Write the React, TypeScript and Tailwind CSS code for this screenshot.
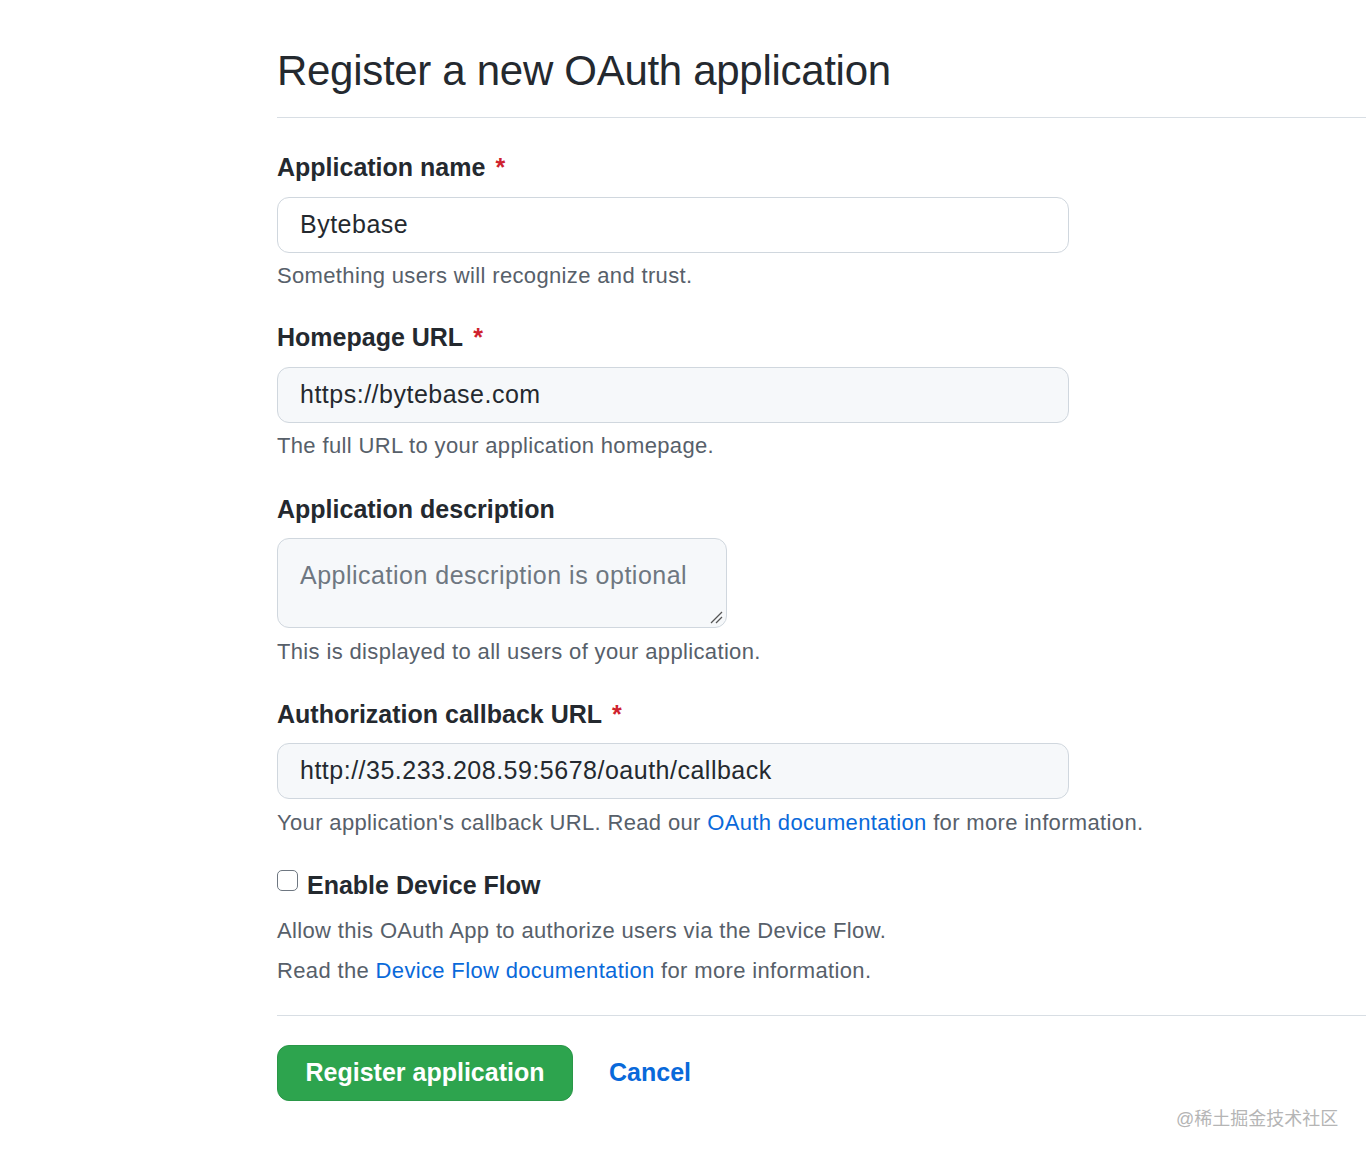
import React from "react";

const Req = () => <span className="text-[#cf222e] ml-[10px]">*</span>;

export default function App() {
  return (
    <div className="min-h-[1158px] w-[1366px] bg-white text-[#24292f] relative" style={{ fontFamily: '"Liberation Sans", Arial, sans-serif' }}>
      <div className="pl-[277px] pt-[45px]">
        <h1 className="text-[42px] leading-[52px] font-normal tracking-[-0.3px] pb-[20px] border-b border-[#d8dee4]">
          Register a new OAuth application
        </h1>
        <div className="w-[900px] pt-[33px]">
          <div className="text-[25px] font-bold leading-[32px]">Application name<Req /></div>
          <div className="mt-[14px] w-[792px] h-[56px] rounded-[12px] border border-[#d0d7de] bg-white flex items-center px-[22px] text-[25px] tracking-[0.5px]">Bytebase</div>
          <div className="mt-[9px] text-[22px] tracking-[0.35px] text-[#57606a] leading-[28px]">Something users will recognize and trust.</div>

          <div className="mt-[31px] text-[25px] font-bold leading-[32px]">Homepage URL<Req /></div>
          <div className="mt-[14px] w-[792px] h-[56px] rounded-[12px] border border-[#d0d7de] bg-[#f6f8fa] flex items-center px-[22px] text-[25px] tracking-[0.5px]">https://bytebase.com</div>
          <div className="mt-[9px] text-[22px] tracking-[0.35px] text-[#57606a] leading-[28px]">The full URL to your application homepage.</div>

          <div className="mt-[33px] text-[25px] font-bold leading-[32px]">Application description</div>
          <div className="mt-[13px] w-[450px] h-[90px] rounded-[12px] border border-[#d0d7de] bg-[#f6f8fa] relative px-[22px] pt-[18px] text-[25px] tracking-[0.5px] text-[#6e7781]">
            Application description is optional
            <svg className="absolute right-[3px] bottom-[3px]" width="14" height="14" viewBox="0 0 14 14">
              <line x1="2" y1="13" x2="13" y2="2" stroke="#555" strokeWidth="1.2" />
              <line x1="7" y1="13" x2="13" y2="7" stroke="#555" strokeWidth="1.2" />
            </svg>
          </div>
          <div className="mt-[10px] text-[22px] tracking-[0.35px] text-[#57606a] leading-[28px]">This is displayed to all users of your application.</div>

          <div className="mt-[32px] text-[25px] font-bold leading-[32px]">Authorization callback URL<Req /></div>
          <div className="mt-[13px] w-[792px] h-[56px] rounded-[12px] border border-[#d0d7de] bg-[#f6f8fa] flex items-center px-[22px] text-[25px] tracking-[0.5px]">http://35.233.208.59:5678/oauth/callback</div>
          <div className="mt-[10px] text-[22px] tracking-[0.35px] text-[#57606a] leading-[28px]">
            Your application's callback URL. Read our <span className="text-[#0969da]">OAuth documentation</span> for more information.
          </div>

          <div className="mt-[32px] flex items-center">
            <span className="w-[21px] h-[21px] rounded-[5px] border-[1.5px] border-[#6e7781] bg-white mr-[9px] -mt-[9px]"></span>
            <span className="text-[25px] font-bold leading-[32px]">Enable Device Flow</span>
          </div>
          <div className="mt-[16px] text-[22px] tracking-[0.35px] text-[#57606a] leading-[28px]">Allow this OAuth App to authorize users via the Device Flow.</div>
          <div className="mt-[12px] text-[22px] tracking-[0.35px] text-[#57606a] leading-[28px]">
            Read the <span className="text-[#0969da]">Device Flow documentation</span> for more information.
          </div>
        </div>
        <div className="mt-[30px] border-t border-[#d8dee4]"></div>
        <div className="mt-[29px] flex items-center">
          <div className="w-[296px] h-[56px] rounded-[12px] bg-[#2da44e] border border-[#2a9748] text-white text-[25px] font-bold flex items-center justify-center">Register application</div>
          <div className="ml-[36px] text-[25px] font-bold text-[#0969da]">Cancel</div>
        </div>
      </div>
      <div className="absolute left-[1176px] top-[1106px] text-[18px] text-[#b5b5b5]" style={{ fontFamily: '"Liberation Sans", "Noto Sans CJK SC", sans-serif' }}>@稀土掘金技术社区</div>
    </div>
  );
}
